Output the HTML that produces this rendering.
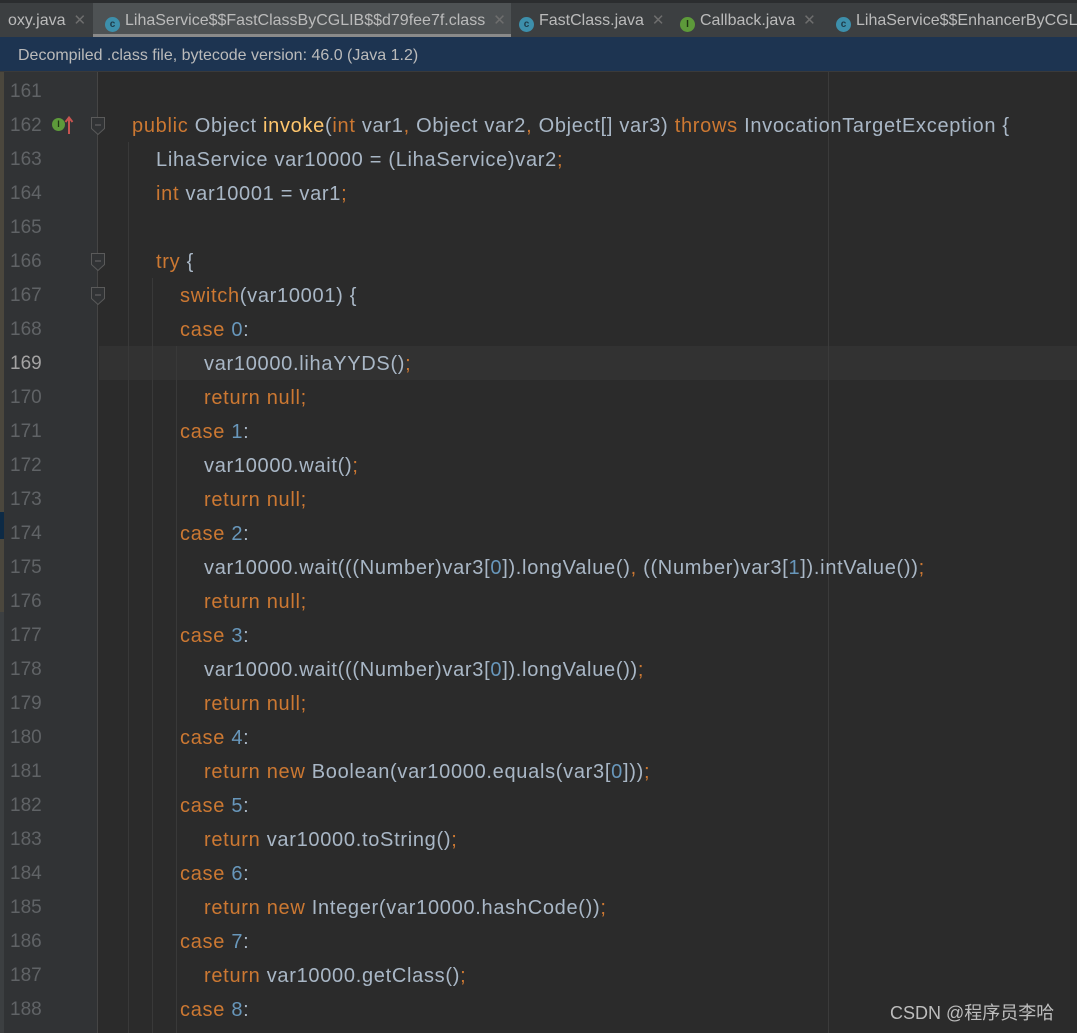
<!DOCTYPE html>
<html><head><meta charset="utf-8"><style>
*{margin:0;padding:0;box-sizing:border-box}
body{width:1077px;height:1033px;overflow:hidden;background:#2b2b2b;font-family:"Liberation Sans","Noto Sans CJK SC",sans-serif;position:relative}
.tabs{position:absolute;left:0;top:0;width:1077px;height:37px;background:#3c3f41;border-top:3px solid #2b2d2f;font-size:16px;color:#bbbbbb;white-space:nowrap}
.tab{position:absolute;top:0;height:34px;line-height:36px}
.x{color:#6e6e6e;margin-left:8px;font-size:15px}
.ic{display:inline-block;width:15px;height:15px;border-radius:50%;vertical-align:-2px;margin-right:5px;color:#1d3a48;font-size:10px;text-align:center;line-height:15px;font-weight:bold}
.info{position:absolute;left:0;top:37px;width:1077px;height:35px;background:#1d3451;color:#bbbbbb;font-size:16px;line-height:38px;padding-left:18px;border-bottom:1px solid #3a3a3a}
.gut{position:absolute;left:0;top:72px;width:98px;height:961px;background:#313335;border-right:1px solid #454545}
.strip{position:absolute;left:0;width:4px}
.ln{position:absolute;left:10px;font-size:19px;color:#606366;height:34px;line-height:36px}
.code{position:absolute;height:34px;line-height:36px;font-size:20px;letter-spacing:0.7px;color:#a9b7c6;white-space:pre}
.k{color:#cc7832}.n{color:#6897bb}.m{color:#ffc66d}
.g{position:absolute;width:1px;background:#393939}
.fold{position:absolute;left:90px}
</style></head><body>
<div class="tabs">
<div class="tab" style="left:8px">oxy.java<span class="x">✕</span></div>
<div class="tab" style="left:93px;width:418px;padding-left:12px;background:#4e5254;border-bottom:3px solid #8a8a8a"><span class="ic" style="background:#3d8fab">c</span>LihaService$$FastClassByCGLIB$$d79fee7f.class<span class="x">✕</span></div>
<div class="tab" style="left:519px"><span class="ic" style="background:#3d8fab">c</span>FastClass.java<span class="x">✕</span></div>
<div class="tab" style="left:680px"><span class="ic" style="background:#5d9a3a;color:#1f3413">I</span>Callback.java<span class="x">✕</span></div>
<div class="tab" style="left:836px"><span class="ic" style="background:#3d8fab">c</span>LihaService$$EnhancerByCGLIB</div>
</div>
<div class="info">Decompiled .class file, bytecode version: 46.0 (Java 1.2)</div>
<div class="gut"></div>
<div class="strip" style="top:72px;height:440px;background:#4b473d"></div>
<div class="strip" style="top:512px;height:27px;background:#0d2a45"></div>
<div class="strip" style="top:539px;height:73px;background:#4b473d"></div>
<div class="strip" style="top:612px;height:421px;background:#3c3f41"></div>
<div style="position:absolute;left:99px;top:346px;width:978px;height:34px;background:#323232"></div>
<div class="g" style="left:828px;top:72px;height:961px;background:#3b3b3b"></div>
<div class="g" style="left:128px;top:142px;height:891px"></div>
<div class="g" style="left:152px;top:278px;height:755px"></div>
<div class="g" style="left:176px;top:346px;height:687px"></div>
<svg class="fold" style="top:116px" width="16" height="20"><path d="M1.5 1.5H14.5V12.5L8 18.5L1.5 12.5Z" fill="#313335" stroke="#5a5a5a"/><path d="M5 9H11" stroke="#6a6a6a"/></svg>
<svg class="fold" style="top:252px" width="16" height="20"><path d="M1.5 1.5H14.5V12.5L8 18.5L1.5 12.5Z" fill="#313335" stroke="#5a5a5a"/><path d="M5 9H11" stroke="#6a6a6a"/></svg>
<svg class="fold" style="top:286px" width="16" height="20"><path d="M1.5 1.5H14.5V12.5L8 18.5L1.5 12.5Z" fill="#313335" stroke="#5a5a5a"/><path d="M5 9H11" stroke="#6a6a6a"/></svg>
<div style="position:absolute;left:52px;top:118px;width:13px;height:13px;border-radius:50%;background:#5d9a3a;color:#1f3413;font-size:9px;text-align:center;line-height:13px;font-weight:bold">I</div>
<svg style="position:absolute;left:64px;top:115px" width="10" height="20"><path d="M5 19V3M1.5 7L5 2.5L8.5 7" stroke="#c75450" stroke-width="2" fill="none"/></svg>
<div id="c"></div>
<script>
var L=[
"",
'<span class="k">public </span>Object <span class="m">invoke</span>(<span class="k">int </span>var1<span class="k">, </span>Object var2<span class="k">, </span>Object[] var3) <span class="k">throws </span>InvocationTargetException {',
'LihaService var10000 = (LihaService)var2<span class="k">;</span>',
'<span class="k">int </span>var10001 = var1<span class="k">;</span>',
'',
'<span class="k">try </span>{',
'<span class="k">switch</span>(var10001) {',
'<span class="k">case </span><span class="n">0</span>:',
'var10000.lihaYYDS()<span class="k">;</span>',
'<span class="k">return null;</span>',
'<span class="k">case </span><span class="n">1</span>:',
'var10000.wait()<span class="k">;</span>',
'<span class="k">return null;</span>',
'<span class="k">case </span><span class="n">2</span>:',
'var10000.wait(((Number)var3[<span class="n">0</span>]).longValue()<span class="k">, </span>((Number)var3[<span class="n">1</span>]).intValue())<span class="k">;</span>',
'<span class="k">return null;</span>',
'<span class="k">case </span><span class="n">3</span>:',
'var10000.wait(((Number)var3[<span class="n">0</span>]).longValue())<span class="k">;</span>',
'<span class="k">return null;</span>',
'<span class="k">case </span><span class="n">4</span>:',
'<span class="k">return new </span>Boolean(var10000.equals(var3[<span class="n">0</span>]))<span class="k">;</span>',
'<span class="k">case </span><span class="n">5</span>:',
'<span class="k">return </span>var10000.toString()<span class="k">;</span>',
'<span class="k">case </span><span class="n">6</span>:',
'<span class="k">return new </span>Integer(var10000.hashCode())<span class="k">;</span>',
'<span class="k">case </span><span class="n">7</span>:',
'<span class="k">return </span>var10000.getClass()<span class="k">;</span>',
'<span class="k">case </span><span class="n">8</span>:'];
var X=[0,132,156,156,0,156,180,180,204,204,180,204,204,180,204,204,180,204,204,180,204,180,204,180,204,180,204,180];
var h='';
for(var i=0;i<28;i++){var t=74+34*i;
h+='<div class="ln" style="top:'+t+'px'+(i==8?';color:#a4a3a3':'')+'">'+(161+i)+'</div>';
if(L[i])h+='<div class="code" style="top:'+t+'px;left:'+X[i]+'px">'+L[i]+'</div>';}
document.getElementById('c').innerHTML=h;
</script>
<div style="position:absolute;left:890px;top:1001px;color:#bdbdbd;font-size:18px;line-height:24px">CSDN @程序员李哈</div>
</body></html>
